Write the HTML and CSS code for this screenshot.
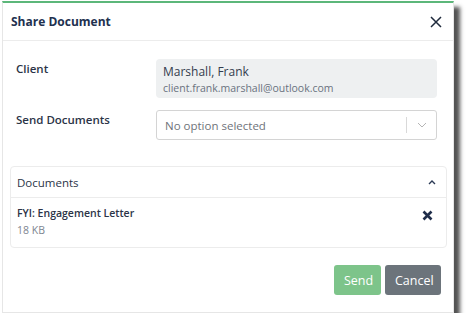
FILE: index.html
```html
<!DOCTYPE html>
<html>
<head>
<meta charset="utf-8">
<link rel="stylesheet" href="styles.css">
</head>
<body>
<div class="dialog">
  <div class="header">
    <div class="title">Share Document</div>
    <svg class="close" width="12" height="12" viewBox="0 0 12 12"><path d="M1 1L11 11M11 1L1 11" stroke="#1f2a3c" stroke-width="1.5" fill="none"/></svg>
  </div>
  <div class="body">
    <div class="row">
      <div class="label">Client</div>
      <div class="client">
        <div class="name">Marshall, Frank</div>
        <div class="email">client.frank.marshall@outlook.com</div>
      </div>
    </div>
    <div class="row">
      <div class="label">Send Documents</div>
      <div class="select">
        <div class="placeholder">No option selected</div>
        <div class="sep"></div>
        <svg class="chev" width="10" height="6" viewBox="0 0 10 6"><path d="M1 1L5 5L9 1" stroke="#b5b5b5" stroke-width="1" fill="none"/></svg>
      </div>
    </div>
    <div class="panel">
      <div class="panel-head">
        <div class="panel-title">Documents</div>
        <svg class="caret" width="8" height="5" viewBox="0 0 8 5"><path d="M1 4L4 1L7 4" stroke="#2b3a55" stroke-width="1.4" fill="none"/></svg>
      </div>
      <div class="doc">
        <div class="doc-info">
          <div class="doc-name">FYI: Engagement Letter</div>
          <div class="doc-size">18 KB</div>
        </div>
        <svg class="remove" width="11" height="11" viewBox="0 0 11 11"><path d="M1.5 1.5L9.5 9.5M9.5 1.5L1.5 9.5" stroke="#1f2d4a" stroke-width="2.6" fill="none"/></svg>
      </div>
    </div>
  </div>
  <div class="footer">
    <button class="btn send">Send</button>
    <button class="btn cancel">Cancel</button>
  </div>
</div>
</body>
</html>
```
FILE: styles.css
```css
html, body {
  margin: 0;
  padding: 0;
  background: #ffffff;
}
body {
  font-family: "Open Sans", "Noto Sans", sans-serif;
  color: #2b3447;
}
.dialog {
  margin: 1px 0 0 2px;
  width: 452px;
  height: 312px;
  box-sizing: border-box;
  background: #fff;
  border: 1px solid #e6e6e6;
  border-top: 2px solid #5cb77a;
  box-shadow: 6px 6px 4px rgba(40, 40, 40, 0.8);
  display: flex;
  flex-direction: column;
}
.header {
  height: 38px;
  box-sizing: border-box;
  border-bottom: 1px solid #ececec;
  display: flex;
  align-items: center;
  justify-content: space-between;
  padding: 0 11px 0 8px;
}
.title {
  font-size: 12px;
  font-weight: 700;
  color: #22314f;
}
.close {
  display: block;
}
.body {
  padding: 18px 6px 0 7px;
  flex: 1;
}
.row {
  display: flex;
  margin-bottom: 12px;
  padding-left: 6px;
  padding-right: 10px;
}
.label {
  width: 140px;
  font-size: 11.5px;
  font-weight: 600;
  color: #2b3447;
  padding-top: 2px;
}
.client {
  flex: 1;
  background: #eef0f1;
  border-radius: 4px;
  padding: 4px 7px 3px 7px;
  height: 39px;
  box-sizing: border-box;
}
.name {
  font-size: 12px;
  color: #333c4e;
  line-height: 17px;
}
.email {
  font-size: 10.5px;
  color: #6a7280;
  line-height: 16px;
}
.select {
  flex: 1;
  height: 30px;
  box-sizing: border-box;
  border: 1px solid #d4d4d4;
  border-radius: 3px;
  display: flex;
  align-items: center;
  padding-left: 8px;
}
.placeholder {
  flex: 1;
  font-size: 11.5px;
  color: #6f737a;
}
.sep {
  width: 1px;
  height: 16px;
  background: #d9d9d9;
}
.chev {
  margin: 0 9px 0 10px;
  display: block;
}
.panel {
  margin-top: 26px;
  border: 1px solid #ececec;
  border-radius: 4px;
}
.panel-head {
  height: 31px;
  box-sizing: border-box;
  border-bottom: 1px solid #ececec;
  display: flex;
  align-items: center;
  justify-content: space-between;
  padding: 0 10px 0 6px;
}
.panel-title {
  font-size: 11.5px;
  color: #2b3447;
}
.caret {
  display: block;
}
.doc {
  display: flex;
  align-items: flex-start;
  justify-content: space-between;
  padding: 7px 13px 8px 6px;
}
.doc-name {
  font-size: 10.5px;
  font-weight: 600;
  color: #2b3447;
  line-height: 17px;
}
.doc-size {
  font-size: 10.5px;
  color: #7d8590;
  line-height: 17px;
}
.remove {
  display: block;
  margin-top: 5px;
}
.footer {
  display: flex;
  justify-content: flex-end;
  gap: 4px;
  padding: 0 12px 17px 0;
}
.btn {
  font-family: "Open Sans", "Noto Sans", sans-serif;
  font-size: 12.5px;
  color: #fff;
  border: none;
  border-radius: 3px;
  height: 30px;
  padding: 0 10px;
}
.send {
  background: #7dc48a;
  width: 47px;
}
.cancel {
  background: #6c747b;
  width: 56px;
}
```
